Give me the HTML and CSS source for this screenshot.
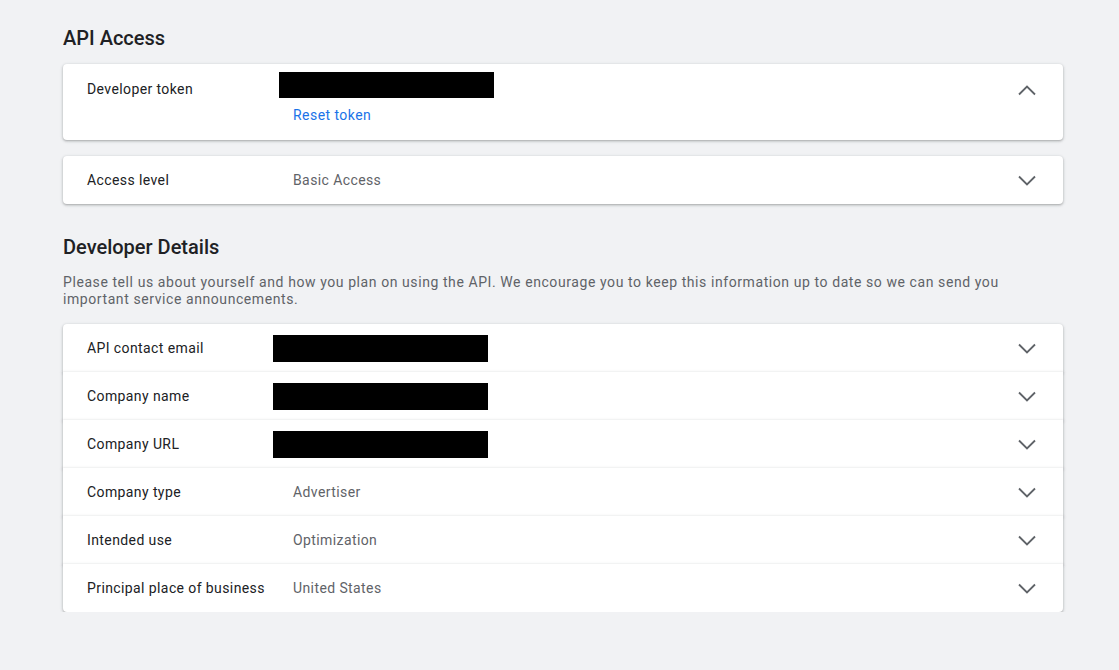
FILE: index.html
```html
<!DOCTYPE html>
<html lang="en">
<head>
	<meta charset="UTF-8">
	<title>API Center</title>
	<link rel="stylesheet" href="styles.css">
</head>
<body>
	<div class="page">
		<h2 class="section-title">API Access</h2>

		<div class="panel panel-open">
			<div class="panel-label">Developer token</div>
			<div class="panel-value">
				<div class="redacted redacted-token"></div>
				<a href="javascript:;" class="panel-link">Reset token</a>
			</div>
			<svg class="panel-icon panel-icon-open" viewBox="0 0 24 24"><polyline points="4,15.5 12,7.5 20,15.5"/></svg>
		</div>

		<div class="panel panel-single">
			<div class="panel-label">Access level</div>
			<div class="panel-value">Basic Access</div>
			<svg class="panel-icon" viewBox="0 0 24 24"><polyline points="4,8.5 12,16.5 20,8.5"/></svg>
		</div>

		<h2 class="section-title section-title-details">Developer Details</h2>
		<p class="section-desc">Please tell us about yourself and how you plan on using the API. We encourage you to keep this information up to date so we can send you important service announcements.</p>

		<div class="panel-list">
			<div class="panel">
				<div class="panel-label">API contact email</div>
				<div class="panel-value"><div class="redacted"></div></div>
				<svg class="panel-icon" viewBox="0 0 24 24"><polyline points="4,8.5 12,16.5 20,8.5"/></svg>
			</div>
			<div class="panel">
				<div class="panel-label">Company name</div>
				<div class="panel-value"><div class="redacted"></div></div>
				<svg class="panel-icon" viewBox="0 0 24 24"><polyline points="4,8.5 12,16.5 20,8.5"/></svg>
			</div>
			<div class="panel">
				<div class="panel-label">Company URL</div>
				<div class="panel-value"><div class="redacted"></div></div>
				<svg class="panel-icon" viewBox="0 0 24 24"><polyline points="4,8.5 12,16.5 20,8.5"/></svg>
			</div>
			<div class="panel">
				<div class="panel-label">Company type</div>
				<div class="panel-value">Advertiser</div>
				<svg class="panel-icon" viewBox="0 0 24 24"><polyline points="4,8.5 12,16.5 20,8.5"/></svg>
			</div>
			<div class="panel">
				<div class="panel-label">Intended use</div>
				<div class="panel-value">Optimization</div>
				<svg class="panel-icon" viewBox="0 0 24 24"><polyline points="4,8.5 12,16.5 20,8.5"/></svg>
			</div>
			<div class="panel">
				<div class="panel-label">Principal place of business</div>
				<div class="panel-value">United States</div>
				<svg class="panel-icon" viewBox="0 0 24 24"><polyline points="4,8.5 12,16.5 20,8.5"/></svg>
			</div>
		</div>
	</div>
</body>
</html>
```

FILE: styles.css
```css
* {padding: 0; margin: 0; box-sizing: border-box;}
body {
	background: #f1f2f4;
	font-family: Roboto, "Liberation Sans", sans-serif;
	font-size: 14px;
	color: #202124;
}
.page {
	width: 1000px;
	margin-left: 63px;
	padding-top: 24px;
}
.section-title {
	font-size: 20px;
	font-weight: 500;
	line-height: 28px;
	color: #202124;
	margin-bottom: 12px;
}
.section-title-details {
	margin-top: 29px;
	margin-bottom: 13px;
}
.section-desc {
	font-size: 14px;
	line-height: 17px;
	color: #5f6368;
	letter-spacing: 0.58px;
	margin-bottom: 16px;
}
.panel {
	position: relative;
	display: flex;
	align-items: center;
	height: 48px;
	padding: 0 24px;
	background-color: #fff;
	box-shadow: 0 1px 2px rgba(60, 64, 67, .3), 0 1px 3px 1px rgba(60, 64, 67, .12);
}
.panel-single {
	border-radius: 4px;
	margin-top: 16px;
}
.panel-open {
	align-items: flex-start;
	height: 76px;
	border-radius: 4px;
}
.panel-list .panel:first-child {
	border-radius: 4px 4px 0 0;
}
.panel-list .panel:last-child {
	border-radius: 0 0 4px 4px;
}
.panel-label {
	width: 206px;
	flex-shrink: 0;
	line-height: 20px;
	color: #202124;
	letter-spacing: 0.4px;
}
.panel-open .panel-label {
	padding-top: 15px;
}
.panel-value {
	flex: 1;
	line-height: 20px;
	color: #5f6368;
	letter-spacing: 0.4px;
}
.panel-open .panel-value {
	padding-top: 8px;
}
.redacted {
	width: 215px;
	height: 27px;
	margin-left: -20px;
	background: #000;
}
.redacted-token {
	margin-left: -14px;
	height: 26px;
}
.panel-link {
	display: inline-block;
	margin-top: 7px;
	color: #1a73e8;
	text-decoration: none;
	letter-spacing: 0.45px;
}
.panel-icon {
	width: 24px;
	height: 24px;
	flex-shrink: 0;
	fill: none;
	stroke: #5f6368;
	stroke-width: 1.8;
}
.panel-icon-open {
	margin-top: 15px;
}
```
